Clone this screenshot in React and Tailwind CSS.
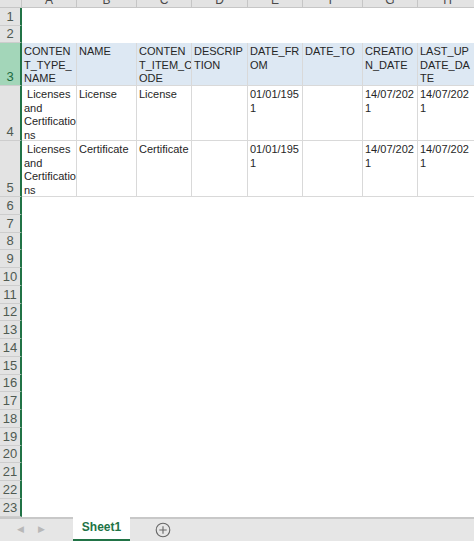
const COLS = [
  { l: 'A', w: 'w-[55px]' },
  { l: 'B', w: 'w-[60px]' },
  { l: 'C', w: 'w-[55px]' },
  { l: 'D', w: 'w-[56px]' },
  { l: 'E', w: 'w-[55px]' },
  { l: 'F', w: 'w-[60px]' },
  { l: 'G', w: 'w-[55px]' },
  { l: 'H', w: 'w-[60px]' },
];

const HEAD = [
  ['CONTEN', 'T_TYPE_', 'NAME'],
  ['NAME'],
  ['CONTEN', 'T_ITEM_C', 'ODE'],
  ['DESCRIP', 'TION'],
  ['DATE_FR', 'OM'],
  ['DATE_TO'],
  ['CREATIO', 'N_DATE'],
  ['LAST_UP', 'DATE_DA', 'TE'],
];

const row = name => [
  ['\u00a0Licenses', 'and', 'Certificatio', 'ns'],
  [name],
  [name],
  [],
  ['01/01/195', '1'],
  [],
  ['14/07/202', '1'],
  ['14/07/202', '1'],
];

const DATA = [row('License'), row('Certificate')];

function RowHead({ n, h, active }) {
  return (
    <div
      className={`${h} w-[22px] shrink-0 flex items-end justify-center pb-[1px] border-r-2 border-r-[#217346] border-b border-b-[#cdcdcd] text-[13px] leading-[15px] ${
        active ? 'bg-[#a3d6b9] text-[#1d6b3f]' : 'bg-[#e3e3e3] text-[#4f5a52]'
      }`}>
      {n}
    </div>
  );
}

function Cell({ w, lines, blue }) {
  return (
    <div
      className={`${w} shrink-0 border-r border-b border-[#d9d9d9] px-[2px] pt-[2px] overflow-hidden whitespace-pre ${
        blue ? 'bg-[#dde8f3]' : 'bg-white'
      }`}>
      {lines.map((t, i) => (
        <div key={i}>{t}</div>
      ))}
    </div>
  );
}

export default function App() {
  const empty = Array.from({ length: 18 }, (_, i) => i + 6);

  return (
    <div className="w-[474px] h-[541px] overflow-hidden bg-white flex flex-col font-['Liberation_Sans',Arial,sans-serif] text-[11px] leading-[13.5px] text-[#262626]">
      <div className="flex-1 overflow-hidden">
        {/* column letters, cropped at the top */}
        <div className="flex h-[8px] border-b border-[#c6c6c6] bg-[#e3e3e3]">
          <div className="w-[22px] shrink-0 border-r border-[#c6c6c6]" />
          {COLS.map(c => (
            <div
              key={c.l}
              className={`${c.w} shrink-0 flex items-end justify-center border-r border-[#c6c6c6] overflow-hidden text-[12px] leading-[13px] text-[#4a4a4a]`}>
              {c.l}
            </div>
          ))}
        </div>

        <div className="flex h-[18px]">
          <RowHead n={1} h="h-[18px]" />
        </div>
        <div className="flex h-[17px]">
          <RowHead n={2} h="h-[17px]" />
        </div>

        <div className="flex h-[43px]">
          <RowHead n={3} h="h-[43px]" active />
          {COLS.map((c, i) => (
            <Cell key={c.l} w={c.w} lines={HEAD[i]} blue />
          ))}
        </div>

        {DATA.map((r, ri) => (
          <div key={ri} className={`flex ${ri === 0 ? 'h-[55px]' : 'h-[56px]'}`}>
            <RowHead n={ri + 4} h={ri === 0 ? 'h-[55px]' : 'h-[56px]'} />
            {COLS.map((c, i) => (
              <Cell key={c.l} w={c.w} lines={r[i]} />
            ))}
          </div>
        ))}

        {empty.map(n => (
          <div key={n} className="flex h-[17.78px]">
            <RowHead n={n} h="h-[17.78px]" />
          </div>
        ))}
      </div>

      {/* sheet tabs */}
      <div className="h-[24px] shrink-0 flex items-stretch bg-[#e6e6e6] border-t-2 border-[#c8c8c8]">
        <div className="w-[73px] flex items-center gap-[14px] pl-[17px] text-[9px] text-[#b8b8b8]">
          <span>◀</span>
          <span>▶</span>
        </div>
        <div className="w-[57px] -mt-[2px] bg-white border-b-2 border-[#217346] flex items-center justify-center text-[12px] font-bold text-[#217346]">
          Sheet1
        </div>
        <div className="flex items-center pl-[25px]">
          <svg width="16" height="16" viewBox="0 0 16 16" fill="none" stroke="#666" strokeWidth="1.1">
            <circle cx="8" cy="8" r="6.8" />
            <path d="M8 4.3v7.4M4.3 8h7.4" />
          </svg>
        </div>
      </div>
    </div>
  );
}
